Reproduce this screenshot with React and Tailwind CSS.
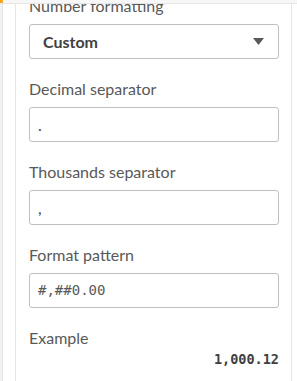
import React from 'react';

const Label = ({ children, className = '' }) => (
    <div className={`text-[16px] leading-5 text-[#595959] ${className}`}>{children}</div>
);

const TextInput = ({ value, mono = false }) => (
    <div className="h-[35px] border border-[#bfbfbf] rounded-[3px] bg-white flex items-center px-2">
        <span className={mono ? 'font-["DejaVu_Sans_Mono",monospace] text-[14px] text-[#595959]' : 'text-[16px] text-[#404040]'}>
            {value}
        </span>
    </div>
);

const App = () => {
    return (
        <div className="w-[297px] h-[381px] bg-white overflow-hidden relative font-['Lato',sans-serif]">
            {/* scroll shadow strip on top */}
            <div className="absolute top-0 left-0 right-0 h-[4px] bg-[#f7f7f7] border-b border-[#e6e6e6] z-10">
                <div className="w-[3px] h-[3px] bg-[#f5a623]" />
            </div>
            <div className="flex h-full">
                <div className="w-[3px] bg-[#f2f2f2] border-r border-[#e3e3e3]" />
                <div className="w-[12px]" />
                <div className="w-[277px] border-l border-r border-[#e6e6e6] pl-[13px] pr-[12px]">
                    <div className="-mt-[4px] flex flex-col">
                        <Label className="mb-[8px]">Number formatting</Label>
                        <div className="h-[35px] border border-[#bfbfbf] rounded-[3px] bg-white flex items-center justify-between pl-[13px] pr-[14px]">
                            <span className="text-[16px] font-bold text-[#404040]">Custom</span>
                            <svg width="11" height="7" viewBox="0 0 11 7">
                                <path d="M0 0 L11 0 L5.5 7 Z" fill="#595959" />
                            </svg>
                        </div>

                        <Label className="mt-[20px] mb-[8px]">Decimal separator</Label>
                        <TextInput value="." />

                        <Label className="mt-[20px] mb-[8px]">Thousands separator</Label>
                        <TextInput value="," />

                        <Label className="mt-[20px] mb-[8px]">Format pattern</Label>
                        <TextInput value="#,##0.00" mono />

                        <Label className="mt-[20px]">Example</Label>
                        <div className="text-right font-['DejaVu_Sans_Mono',monospace] font-bold text-[13.5px] text-[#404040] leading-5 mt-[1px]">
                            1,000.12
                        </div>
                    </div>
                </div>
            </div>
        </div>
    );
};

export default App;
